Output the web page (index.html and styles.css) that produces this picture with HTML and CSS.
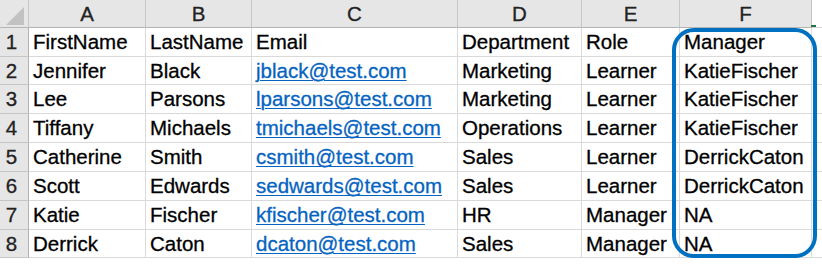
FILE: index.html
```html
<!DOCTYPE html>
<html>
<head>
<meta charset="utf-8">
<link rel="stylesheet" href="styles.css">
</head>
<body>
<div class="sheet">
  <div class="grid">
    <div class="hd corner"><span class="tri"></span></div>
    <div class="hd col">A</div>
    <div class="hd col">B</div>
    <div class="hd col">C</div>
    <div class="hd col">D</div>
    <div class="hd col">E</div>
    <div class="hd col last">F</div>
    <div class="hd tail"></div>

    <div class="rh">1</div><div class="c">FirstName</div><div class="c">LastName</div><div class="c">Email</div><div class="c">Department</div><div class="c">Role</div><div class="c">Manager</div><div class="t"></div>
    <div class="rh">2</div><div class="c">Jennifer</div><div class="c">Black</div><div class="c"><a class="link">jblack@test.com</a></div><div class="c">Marketing</div><div class="c">Learner</div><div class="c">KatieFischer</div><div class="t"></div>
    <div class="rh">3</div><div class="c">Lee</div><div class="c">Parsons</div><div class="c"><a class="link">lparsons@test.com</a></div><div class="c">Marketing</div><div class="c">Learner</div><div class="c">KatieFischer</div><div class="t"></div>
    <div class="rh">4</div><div class="c">Tiffany</div><div class="c">Michaels</div><div class="c"><a class="link">tmichaels@test.com</a></div><div class="c">Operations</div><div class="c">Learner</div><div class="c">KatieFischer</div><div class="t"></div>
    <div class="rh">5</div><div class="c">Catherine</div><div class="c">Smith</div><div class="c"><a class="link">csmith@test.com</a></div><div class="c">Sales</div><div class="c">Learner</div><div class="c">DerrickCaton</div><div class="t"></div>
    <div class="rh">6</div><div class="c">Scott</div><div class="c">Edwards</div><div class="c"><a class="link">sedwards@test.com</a></div><div class="c">Sales</div><div class="c">Learner</div><div class="c">DerrickCaton</div><div class="t"></div>
    <div class="rh">7</div><div class="c">Katie</div><div class="c">Fischer</div><div class="c"><a class="link">kfischer@test.com</a></div><div class="c">HR</div><div class="c">Manager</div><div class="c">NA</div><div class="t"></div>
    <div class="rh">8</div><div class="c">Derrick</div><div class="c">Caton</div><div class="c"><a class="link">dcaton@test.com</a></div><div class="c">Sales</div><div class="c">Manager</div><div class="c">NA</div><div class="t"></div>
  </div>
  <span class="handle"></span>
  <div class="highlight"></div>
</div>
</body>
</html>
```

FILE: styles.css
```css
html, body {
  margin: 0;
  padding: 0;
  background: #ffffff;
}
.sheet {
  position: relative;
  width: 822px;
  height: 264px;
  overflow: hidden;
  font-family: "Liberation Sans", Arial, sans-serif;
  font-size: 20.5px;
  color: #000;
  -webkit-text-stroke: 0.3px currentColor;
}
.grid {
  display: grid;
  grid-template-columns: 29px 117px 106px 206px 124px 98px 132px 10px;
  grid-template-rows: 28px 29px 28px 29px 29px 29px 29px 29px 28px;
}
.hd {
  background: #e6e6e6;
  border-right: 1px solid #c6c6c6;
  border-bottom: 1px solid #b4b4b4;
  display: flex;
  align-items: center;
  justify-content: center;
  color: #222;
}
.hd.tail {
  background: #ffffff;
  border-right: none;
  border-bottom: 1px solid #d4d4d4;
}
.tri {
  width: 0;
  height: 0;
  border-left: 18px solid transparent;
  border-bottom: 18px solid #c2c2c2;
  margin: 4px 0 0 2px;
}
.rh {
  background: #e6e6e6;
  border-right: 1px solid #b4b4b4;
  border-bottom: 1px solid #c6c6c6;
  display: flex;
  align-items: center;
  justify-content: center;
  padding-right: 5px;
  color: #222;
}
.c {
  border-right: 1px solid #d9d9d9;
  border-bottom: 1px solid #d9d9d9;
  display: flex;
  align-items: center;
  padding-left: 4px;
  white-space: nowrap;
  overflow: hidden;
}
.t {
  border-bottom: 1px solid #d9d9d9;
}
.link {
  color: #0563c1;
  text-decoration: underline;
  text-decoration-thickness: 1px;
  text-underline-offset: 2px;
}
.handle {
  position: absolute;
  left: 811px;
  top: 25px;
  width: 5px;
  height: 2px;
  background: #217346;
}
.highlight {
  position: absolute;
  left: 672px;
  top: 28px;
  width: 137px;
  height: 222px;
  border: 4px solid #0070c0;
  border-radius: 22px;
}
```
